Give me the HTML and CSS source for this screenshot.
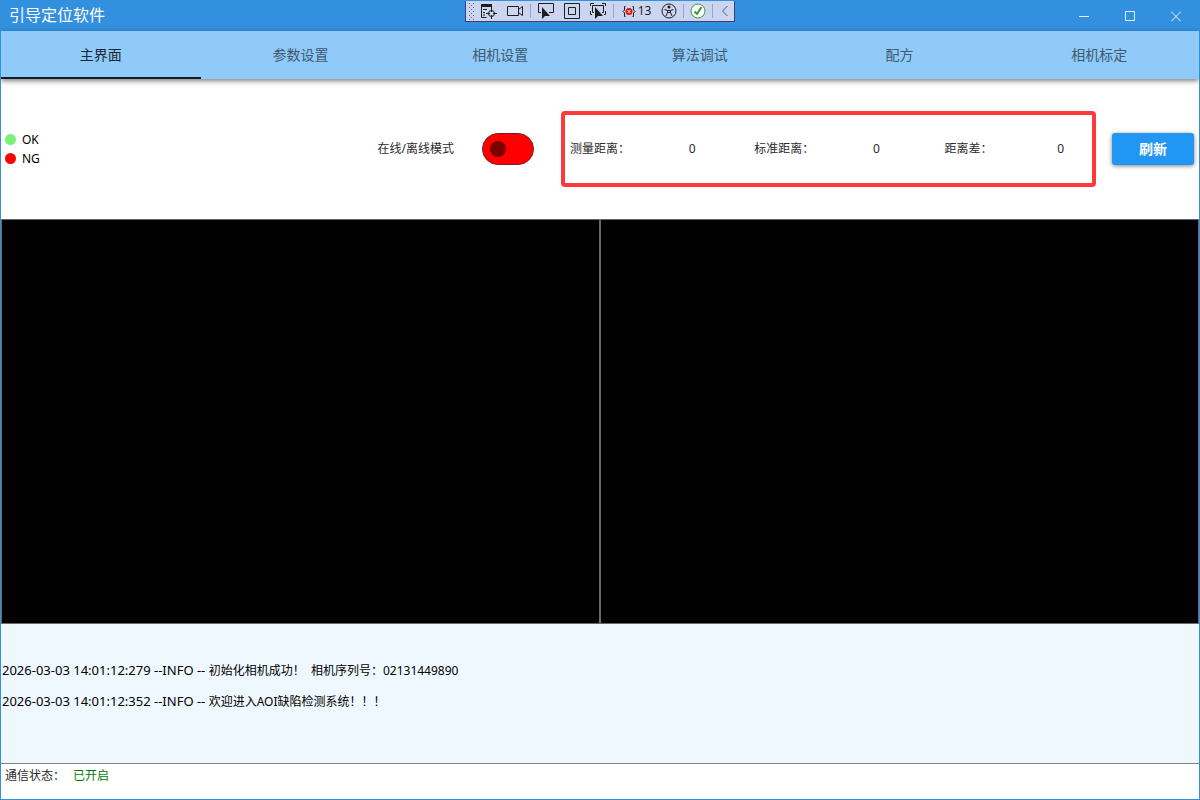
FILE: index.html
```
<!DOCTYPE html>
<html lang="zh-CN">
<head>
  <meta charset="UTF-8">
  <meta name="viewport" content="width=device-width, initial-scale=1.0">
  <title>引导定位软件</title>
  <link rel="stylesheet" href="styles.css">
</head>
<body>
  <header class="titlebar">
    <h1>引导定位软件</h1>
    <div class="window-buttons">
      <button type="button" aria-label="最小化">
        <svg width="10" height="11" viewBox="0 0 10 11"><path d="M0 5.5h10"/></svg>
      </button>
      <button type="button" aria-label="最大化">
        <svg width="10" height="11" viewBox="0 0 10 11"><path d="M.5.5h9v9h-9z"/></svg>
      </button>
      <button type="button" aria-label="关闭">
        <svg width="10" height="11" viewBox="0 0 10 11"><path d="M0 .5l10 10M10 .5l-10 10"/></svg>
      </button>
    </div>
  </header>

  <!-- floating debug toolbar -->
  <div class="debugbar" role="toolbar" aria-label="调试工具">
    <svg class="grip" width="6" height="18" viewBox="0 0 6 18">
      <path d="M0 1.5h1M4 1.5h1M2 3.5h1M0 5.5h1M4 5.5h1M2 7.5h1M0 9.5h1M4 9.5h1M2 11.5h1M0 13.5h1M4 13.5h1M2 15.5h1M0 17.5h1M4 17.5h1"/>
    </svg>
    <button type="button" aria-label="实时可视化树">
      <svg width="18" height="18" viewBox="0 0 18 18">
        <path class="solid" d="M1 2h11v3H1z"/>
        <path d="M1.5 4v11.5h5M11.5 4v2M3 7.5h4M3 10.5h2M3 13h2"/>
        <circle cx="11.5" cy="11.5" r="3"/>
        <path d="M11.5 6v4M11.5 13v4M6 11.5h4M13 11.5h4"/>
      </svg>
    </button>
    <button type="button" aria-label="录制">
      <svg width="18" height="18" viewBox="0 0 18 18"><path d="M1.5 4.5h11v9h-11zM12.5 7.5l4-3v9l-4-3"/></svg>
    </button>
    <span class="sep"></span>
    <button type="button" aria-label="选择元素">
      <svg width="18" height="18" viewBox="0 0 18 18">
        <path d="M4 10.5H1.5v-9h15v9H12"/>
        <path class="solid" d="M5 5v12l3-3h5z"/>
      </svg>
    </button>
    <button type="button" aria-label="显示布局装饰">
      <svg width="18" height="18" viewBox="0 0 18 18"><path d="M1.5 1.5h15v15h-15zM5.5 5.5h7v7h-7z"/></svg>
    </button>
    <button type="button" aria-label="跟踪焦点元素">
      <svg width="18" height="18" viewBox="0 0 18 18">
        <path d="M1.5 4V1.5H5M13 1.5h3.500V4M1.5 9v3.500H3M15 12.500h1.500V9M5 10.500H3.500v-7h11v7H13"/>
        <path class="solid" d="M6 5v12l3-3h5z"/>
      </svg>
    </button>
    <span class="sep"></span>
    <button type="button" class="errors" aria-label="绑定失败 13">
      <svg width="14" height="14" viewBox="0 0 14 14">
        <path d="M3.500 2.500h-1v3.500L1 7.500 2.500 9v3.500h1M10.500 2.500h1v3.500L13 7.500 11.500 9v3.500h-1"/>
        <circle class="red" cx="7" cy="7.500" r="3.500"/>
        <path class="cross" d="M5.500 6l3 3M8.500 6l-3 3"/>
      </svg>
      <span>13</span>
    </button>
    <button type="button" class="narrow" aria-label="辅助功能">
      <svg width="18" height="18" viewBox="0 0 18 18">
        <circle cx="9" cy="9" r="7"/>
        <circle class="solid" cx="9" cy="5" r="1.5"/>
        <path d="M4.500 7.500l3 1v2L6 14M13.500 7.500l-3 1v2L12 14M7.500 8.500h3M7.500 10.500h3"/>
      </svg>
    </button>
    <span class="sep"></span>
    <button type="button" class="narrow reload" aria-label="热重载">
      <svg width="16" height="16" viewBox="0 0 16 16">
        <circle class="ring" cx="8" cy="8" r="7"/>
        <path class="tick" d="M4.500 8.500L7 11l4.500-7"/>
      </svg>
    </button>
    <span class="sep"></span>
    <button type="button" class="collapse" aria-label="折叠">
      <svg width="8" height="12" viewBox="0 0 8 12"><path class="chevron" d="M6.500 1l-5 5 5 5"/></svg>
    </button>
  </div>

  <nav class="tabs" role="tablist">
    <button type="button" role="tab" class="tab active" aria-selected="true">主界面</button>
    <button type="button" role="tab" class="tab">参数设置</button>
    <button type="button" role="tab" class="tab">相机设置</button>
    <button type="button" role="tab" class="tab">算法调试</button>
    <button type="button" role="tab" class="tab">配方</button>
    <button type="button" role="tab" class="tab">相机标定</button>
  </nav>

  <section class="panel">
    <ul class="legend">
      <li><span class="dot ok"></span>OK</li>
      <li><span class="dot ng"></span>NG</li>
    </ul>
    <label for="mode">在线/离线模式</label>
    <input type="checkbox" id="mode" class="toggle">
    <div class="readouts">
      <span>测量距离：</span><output>0</output>
      <span>标准距离：</span><output>0</output>
      <span>距离差：</span><output>0</output>
    </div>
    <button type="button" class="refresh">刷新</button>
  </section>

  <main class="views">
    <div class="view"></div>
    <div class="view"></div>
  </main>

  <section class="log">
    <p><span class="stamp">2026-03-03 14:01:12:279 --INFO -- </span>初始化相机成功！  相机序列号：02131449890</p>
    <p><span class="stamp">2026-03-03 14:01:12:352 --INFO -- </span>欢迎进入AOI缺陷检测系统！！！</p>
  </section>

  <footer class="status">
    <span>通信状态：</span>
    <span class="open">已开启</span>
  </footer>
</body>
</html>
```
FILE: styles.css
```
* {
  box-sizing: border-box;
}

body {
  margin: 0;
  min-height: 100vh;
  display: flex;
  flex-direction: column;
  position: relative;
  border: 1px solid #3390df;
  background-color: #fff;
  color: #2b2b2b;
  font-family: "Noto Sans", "Noto Sans CJK SC", sans-serif;
  font-size: 12px;
  line-height: 16px;
}

button {
  border: 0;
  padding: 0;
  background: none;
  color: inherit;
  font: inherit;
}

svg {
  display: block;
  fill: none;
}

/* title bar */
.titlebar {
  display: flex;
  justify-content: space-between;
  height: 30px;
  background-color: #3390df;
  color: #fff;
}

.titlebar h1 {
  margin: 0;
  padding-left: 8px;
  font-size: 16px;
  font-weight: normal;
  line-height: 28px;
}

.window-buttons {
  display: flex;
}

.window-buttons button {
  width: 46px;
  display: flex;
  align-items: center;
  justify-content: center;
}

.window-buttons svg {
  stroke: #e4f1fc;
}

/* debug toolbar */
.debugbar {
  position: absolute;
  top: -1px;
  left: 50%;
  transform: translateX(-50%);
  width: 270px;
  height: 22px;
  display: flex;
  align-items: center;
  border: 1px solid #3d3d78;
  background-color: #ccd5f0;
  color: #1e1e1e;
}

.debugbar button {
  width: 26px;
  height: 20px;
  display: flex;
  align-items: center;
  justify-content: center;
}

.debugbar svg {
  stroke: #1e1e1e;
}

.debugbar .solid {
  fill: #1e1e1e;
  stroke: none;
}

.debugbar .grip {
  margin: 0 1px 0 3px;
  stroke: #5d6a94;
}

.sep {
  width: 1px;
  height: 14px;
  margin: 0 2px;
  background-color: #95a5cf;
}

.debugbar .errors {
  width: 41px;
  gap: 2px;
}

.errors .red {
  fill: #e51400;
  stroke: none;
}

.errors .cross {
  stroke: #fff;
}

.debugbar .narrow {
  width: 24px;
}

.reload .ring {
  fill: #fff;
  stroke: #379a3b;
}

.reload .tick {
  stroke: #379a3b;
  stroke-width: 2;
}

.debugbar .collapse {
  flex: 1;
}

.collapse .chevron {
  stroke: #4a5590;
}

/* tabs */
.tabs {
  display: flex;
  height: 48px;
  background-color: #90caf9;
  box-shadow: 0 2px 5px rgba(0, 0, 0, 0.5);
}

.tab {
  flex: 1;
  border-top: 2px solid transparent;
  border-bottom: 2px solid transparent;
  color: #3f596d;
  font-size: 14px;
}

.tab.active {
  border-bottom-color: #111c24;
  color: #1d2831;
}

/* control row */
.panel {
  display: grid;
  grid-template-columns: repeat(13, 1fr);
  align-items: center;
  justify-items: center;
  height: 140px;
}

.legend {
  grid-column: span 4;
  justify-self: start;
  margin: 0;
  padding: 0 0 0 4px;
  list-style: none;
  color: #000;
  line-height: 19px;
}

.legend li {
  display: flex;
  align-items: center;
  gap: 6px;
}

.dot {
  width: 11px;
  height: 11px;
  border-radius: 50%;
}

.ok {
  background-color: #77f277;
}

.ng {
  background-color: #f00;
}

.toggle {
  appearance: none;
  width: 52px;
  height: 32px;
  margin: 0;
  padding-left: 7px;
  display: flex;
  align-items: center;
  border: 1px solid #7c2020;
  border-radius: 16px;
  background-color: #f00;
}

.toggle::before {
  content: "";
  width: 16px;
  height: 16px;
  border-radius: 50%;
  background-color: #7a0000;
}

.readouts {
  grid-column: span 6;
  justify-self: stretch;
  align-self: stretch;
  position: relative;
  display: grid;
  grid-template-columns: repeat(6, 1fr);
  align-items: center;
  justify-items: center;
}

.readouts::after {
  content: "";
  position: absolute;
  inset: 32px 11px 32px 7px;
  border: 4px solid #fb3a3d;
  border-radius: 4px;
}

.refresh {
  justify-self: stretch;
  height: 32px;
  margin: 0 5px;
  border-radius: 3px;
  background-color: #2196f3;
  box-shadow: 0 1px 4px rgba(0, 0, 0, 0.5);
  color: #fff;
  font-size: 14px;
  font-weight: bold;
}

/* camera views */
.views {
  flex: 1;
  display: flex;
}

.view {
  flex: 1;
  border: 1px solid #696969;
  background-color: #000;
}

/* log */
.log {
  min-height: 139px;
  padding: 39px 1px 0;
  background-color: #f0f8ff;
  color: #000;
}

.log p {
  margin: 0 0 15px;
  white-space: pre-wrap;
}

.stamp {
  font-size: 13px;
  line-height: 12px;
}

.status {
  display: flex;
  gap: 8px;
  height: 36px;
  padding: 4px 4px 0;
  border-top: 1px solid #808080;
}

.open {
  color: #008000;
}
```
